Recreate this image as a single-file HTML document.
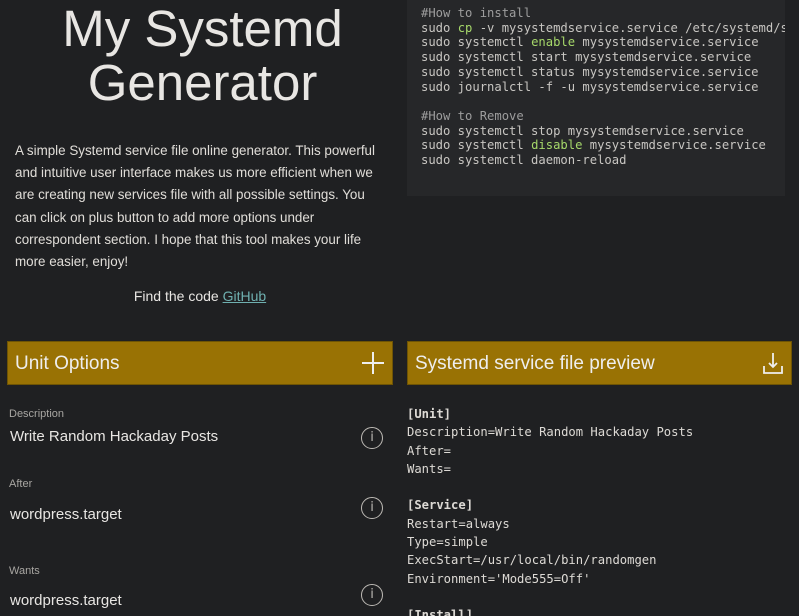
<!DOCTYPE html>
<html><head><meta charset="utf-8"><style>
*{margin:0;padding:0;box-sizing:border-box}
html,body{width:799px;height:616px;overflow:hidden}
body{background:#1f2022;color:#e8e6e3;font-family:"Liberation Sans",sans-serif;position:relative}
.abs{position:absolute}
h1{position:absolute;left:0;width:405px;top:2px;text-align:center;font-weight:normal;font-size:51px;line-height:54px;color:#e8e6e3}
p.intro{position:absolute;left:15px;top:140px;width:372px;font-size:13.4px;line-height:22.2px;color:#e0ddd8}
.find{position:absolute;left:0;width:400px;text-align:center;top:288px;font-size:14px}
.find a{color:#6fb0b0;text-decoration:underline}
.code{position:absolute;left:407px;top:0;width:378px;height:196px;background:#262729;font-family:"DejaVu Sans Mono",monospace;font-size:12.2px;line-height:14.7px;color:#c8c6c2;padding:6px 0 0 14px;white-space:pre;overflow:hidden}
.code .c{color:#9d9d9d}.code .g{color:#a6d86a}
.bar{position:absolute;top:341px;height:44px;background:#997204;border:1px solid #6e5404;font-size:19px;color:#eee;padding-left:7px;line-height:43px}
.lbl{position:absolute;left:9px;font-size:11px;color:#a8a6a2}
.val{position:absolute;left:10px;font-size:15px;color:#e8e6e3}
.info{position:absolute;left:361px;width:22px;height:22px;border:1.5px solid #bdbab5;border-radius:50%;color:#bdbab5;font-family:"DejaVu Sans",sans-serif;font-size:13px;text-align:center;line-height:20px}
.prev{position:absolute;left:407px;top:405px;font-family:"DejaVu Sans Mono",monospace;font-size:12.2px;line-height:18.3px;color:#dddad5;white-space:pre}
</style></head><body>
<h1>My Systemd<br>Generator</h1>
<p class="intro">A simple Systemd service file online generator. This powerful and intuitive user interface makes us more efficient when we are creating new services file with all possible settings. You can click on plus button to add more options under correspondent section. I hope that this tool makes your life more easier, enjoy!</p>
<div class="find">Find the code <a>GitHub</a></div>
<div class="code"><span class="c">#How to install</span>
sudo <span class="g">cp</span> -v mysystemdservice.service /etc/systemd/system/
sudo systemctl <span class="g">enable</span> mysystemdservice.service
sudo systemctl start mysystemdservice.service
sudo systemctl status mysystemdservice.service
sudo journalctl -f -u mysystemdservice.service

<span class="c">#How to Remove</span>
sudo systemctl stop mysystemdservice.service
sudo systemctl <span class="g">disable</span> mysystemdservice.service
sudo systemctl daemon-reload</div>
<div class="bar" style="left:7px;width:386px">Unit Options
<svg class="abs" style="right:7px;top:9px" width="24" height="24" viewBox="0 0 24 24"><path d="M12 1V23M1 12H23" stroke="#eee" stroke-width="2"/></svg></div>
<div class="bar" style="left:407px;width:385px">Systemd service file preview
<svg class="abs" style="right:7px;top:10px" width="22" height="24" viewBox="0 0 22 24"><path d="M11 1V15M7 11L11 15L15 11M2 14V21H20V14" stroke="#eee" stroke-width="1.8" fill="none"/></svg></div>
<div class="lbl" style="top:408px">Description</div>
<div class="val" style="top:428px">Write Random Hackaday Posts</div>
<div class="info" style="top:427px">i</div>
<div class="lbl" style="top:478px">After</div>
<div class="val" style="top:506px">wordpress.target</div>
<div class="info" style="top:497px">i</div>
<div class="lbl" style="top:565px">Wants</div>
<div class="val" style="top:592px">wordpress.target</div>
<div class="info" style="top:584px">i</div>
<div class="prev"><b>[Unit]</b>
Description=Write Random Hackaday Posts
After=
Wants=

<b>[Service]</b>
Restart=always
Type=simple
ExecStart=/usr/local/bin/randomgen
Environment='Mode555=Off'

<b>[Install]</b></div>
</body></html>
